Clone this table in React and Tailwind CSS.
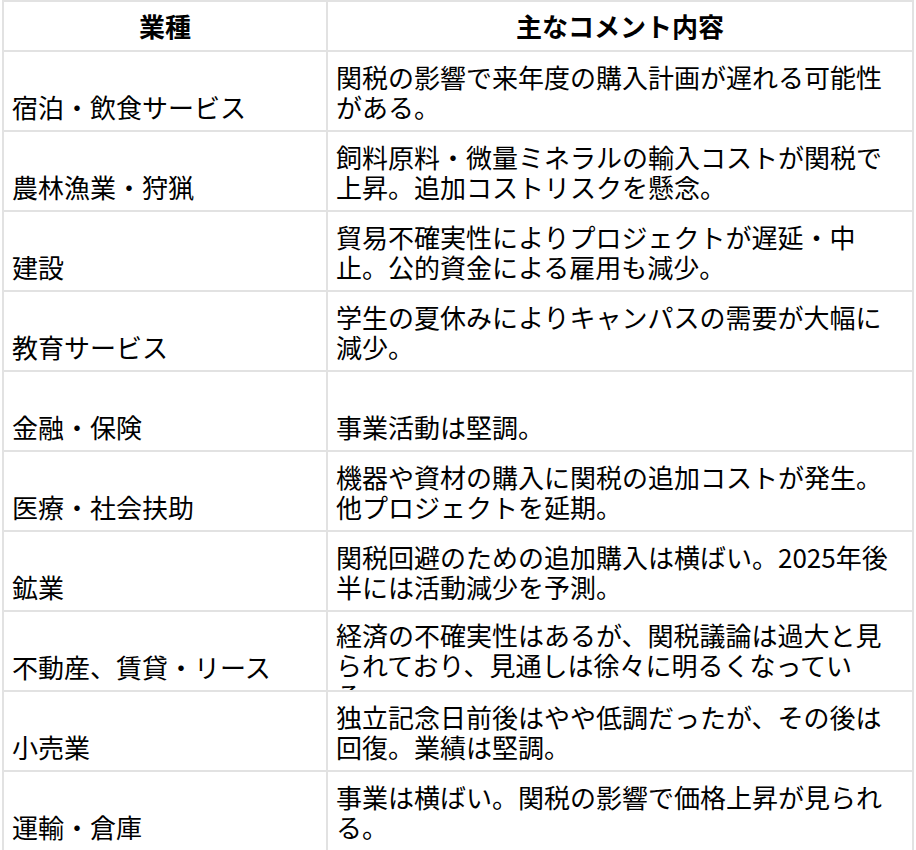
const ROWS = [
  { sector: '宿泊・飲食サービス', comment: '関税の影響で来年度の購入計画が遅れる可能性がある。' },
  { sector: '農林漁業・狩猟', comment: '飼料原料・微量ミネラルの輸入コストが関税で上昇。追加コストリスクを懸念。' },
  { sector: '建設', comment: '貿易不確実性によりプロジェクトが遅延・中止。公的資金による雇用も減少。' },
  { sector: '教育サービス', comment: '学生の夏休みによりキャンパスの需要が大幅に減少。' },
  { sector: '金融・保険', comment: '事業活動は堅調。' },
  { sector: '医療・社会扶助', comment: '機器や資材の購入に関税の追加コストが発生。他プロジェクトを延期。' },
  { sector: '鉱業', comment: '関税回避のための追加購入は横ばい。2025年後半には活動減少を予測。' },
  { sector: '不動産、賃貸・リース', comment: '経済の不確実性はあるが、関税議論は過大と見られており、見通しは徐々に明るくなっている。' },
  { sector: '小売業', comment: '独立記念日前後はやや低調だったが、その後は回復。業績は堅調。' },
  { sector: '運輸・倉庫', comment: '事業は横ばい。関税の影響で価格上昇が見られる。' },
];

function Cell({ children, divider }) {
  // text sits at the bottom; when it overflows it starts at the top and is cut off
  return (
    <div className={`flex flex-col overflow-hidden px-2 pt-2 pb-2 ${divider ? 'border-r-2 border-[#e2e2e2]' : ''}`}>
      <div className="mt-auto">{children}</div>
    </div>
  );
}

export default function App() {
  return (
    <div className="min-h-screen bg-white">
      <div
        className="ml-[2px] w-[912px] border-x-2 border-t-2 border-[#e2e2e2] text-[26px] leading-[30px] text-black"
        style={{ fontFamily: '"Noto Sans CJK JP", "Noto Sans", sans-serif' }}
      >
        {/* Header */}
        <div className="grid h-[50px] grid-cols-[324px_584px] border-b-2 border-[#e2e2e2] font-bold">
          <div className="flex items-center justify-center border-r-2 border-[#e2e2e2]">業種</div>
          <div className="flex items-center justify-center">主なコメント内容</div>
        </div>

        {/* Rows */}
        {ROWS.map((r) => (
          <div key={r.sector} className="grid h-[80px] grid-cols-[324px_584px] border-b-2 border-[#e2e2e2]">
            <Cell divider>{r.sector}</Cell>
            <Cell>{r.comment}</Cell>
          </div>
        ))}
      </div>
    </div>
  );
}
